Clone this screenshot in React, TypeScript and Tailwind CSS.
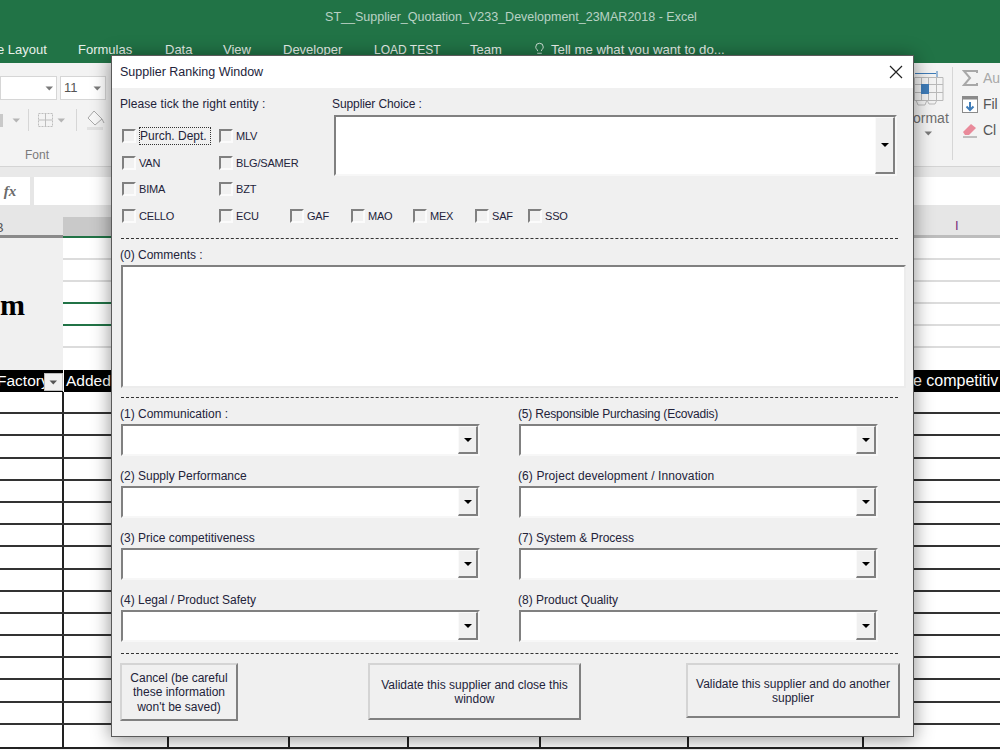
import React from "react";
import { Lightbulb } from "lucide-react";

const cols = [64, 105, 121, 119, 132, 148, 175, 136];
const font = "font-['Liberation_Sans',Arial,sans-serif]";

function Caret({ color = "#7a7a7a" }: { color?: string }) {
  return (
    <svg width="9" height="5" viewBox="0 0 9 5">
      <path d="M0.5 0.5 H8 L4.25 4.5 Z" fill={color} />
    </svg>
  );
}

function Check({ label, boxed }: { label: string; boxed?: boolean }) {
  return (
    <div className="flex items-center">
      <span className="block w-[14px] h-[14px] border-2 border-t-[#808080] border-l-[#808080] border-b-[#fbfbfb] border-r-[#fbfbfb] bg-[#f1f1f1]" />
      {boxed ? (
        <span className="ml-[3px] px-[0px] w-[72px] h-[18px] leading-[16px] whitespace-nowrap border border-dotted border-[#333]">{label}</span>
      ) : (
        <span className="ml-[3px] leading-[16px] text-[11px] tracking-[-0.2px] whitespace-nowrap">{label}</span>
      )}
    </div>
  );
}

function DropBtn() {
  return (
    <div className="w-[20px] flex items-center justify-center pl-[1px] bg-[#f0f0f0] border-l border-t border-l-[#fafafa] border-t-[#fafafa] border-r-2 border-b-2 border-r-[#808080] border-b-[#808080]">
      <svg width="8" height="4" viewBox="0 0 8 4"><path d="M0 0 H8 L4 4 Z" fill="#000" /></svg>
    </div>
  );
}

function Combo({ label, labelClass = "" }: { label: string; labelClass?: string }) {
  return (
    <div>
      <div className={`h-[16px] leading-[17px] ${labelClass}`}>{label}</div>
      <div className="mt-[2px] ml-[1px] w-[359px] h-[32px] flex bg-white border-2 border-t-[#808080] border-l-[#808080] border-b-[#f7f7f7] border-r-[#f7f7f7]">
        <div className="flex-1" />
        <DropBtn />
      </div>
    </div>
  );
}

function Divider({ className }: { className: string }) {
  return <div className={`ml-[1px] w-[777px] h-0 border-t border-dashed border-[#333] ${className}`} />;
}

function Btn({ children, className }: { children: React.ReactNode; className: string }) {
  return (
    <div className={`flex items-center justify-center text-center leading-[14.5px] px-2 pt-[1px] bg-[#f0f0f0] border-t-2 border-l-2 border-t-[#d4d4d4] border-l-[#d4d4d4] border-r-2 border-b-2 border-r-[#808080] border-b-[#808080] ${className}`}>
      <span>{children}</span>
    </div>
  );
}

export default function App() {
  const tabs: [string, string, string][] = [
    ["e Layout", "w-[81px] ml-[-3px]", "text-[13px]"],
    ["Formulas", "w-[87px]", "text-[13px]"],
    ["Data", "w-[58px]", "text-[13px]"],
    ["View", "w-[60px]", "text-[13px]"],
    ["Developer", "w-[91px]", "text-[13px]"],
    ["LOAD TEST", "w-[96px]", "text-[12px]"],
    ["Team", "w-[63px]", "text-[13px]"],
  ];
  const greens = ["#dcdcdc", "#dcdcdc", "#217346", "#217346", "#dcdcdc", "transparent"];
  return (
    <div className={`relative w-[1000px] h-[750px] overflow-hidden bg-white ${font}`}>
      {/* Excel title + tabs */}
      <div className="h-[63px] bg-[#217346] text-[#dfe9e3] flex flex-col">
        <div className="h-[35px] pt-[9px] text-center text-[12.5px] leading-[16px] pl-[22px] opacity-80">
          ST__Supplier_Quotation_V233_Development_23MAR2018 - Excel
        </div>
        <div className="flex items-center h-[28px] pt-[1px] text-[#e8f0ea]">
          {tabs.map(([t, w, s]) => (
            <div key={t} className={`${w} ${s} shrink-0 whitespace-nowrap`}>{t}</div>
          ))}
          <Lightbulb size={15} className="ml-[-1px]" strokeWidth={1.4} />
          <span className="ml-[4px] text-[13.2px]">Tell me what you want to do...</span>
        </div>
      </div>

      {/* Ribbon */}
      <div className="h-[104px] bg-[#f3f3f3] border-b border-[#d4d4d4] flex justify-between text-[#7a7a7a] text-[13px]">
        <div className="w-[111px] flex flex-col">
          <div className="flex mt-[13px] h-[24px] gap-[3px]">
            <div className="w-[57px] bg-white border border-[#d6d6d6] flex items-center justify-end pr-[2px]"><Caret /></div>
            <div className="w-[46px] bg-white border border-[#d6d6d6] flex items-center justify-between pl-[3px] pr-[3px]"><span className="text-[#555]">11</span><Caret /></div>
          </div>
          <div className="flex items-center h-[24px] mt-[8px]">
            <span className="w-[3px] h-[13px] bg-[#c9c9c9]" />
            <span className="ml-[9px]"><Caret color="#b5b5b5" /></span>
            <span className="ml-[7px] w-px h-[22px] bg-[#d6d6d6]" />
            <svg className="ml-[8px]" width="17" height="16" viewBox="0 0 17 16" fill="none" stroke="#bdbdbd"><rect x="1.5" y="1.5" width="14" height="13" strokeDasharray="2 1" /><path d="M8.5 1.5 V14.5 M1.5 8 H15.5" /></svg>
            <span className="ml-[3px]"><Caret color="#b5b5b5" /></span>
            <span className="ml-[10px] w-px h-[22px] bg-[#d6d6d6]" />
            <svg className="ml-[8px]" width="20" height="20" viewBox="0 0 20 20" fill="none" stroke="#a9a9a9"><path d="M9 1 L17 9 L10 15 L3 8 Z" fill="#f8f8f8" /><path d="M17 9 L19 13" /><rect x="2" y="17" width="16" height="3" fill="#e2e2e2" stroke="none" /></svg>
          </div>
          <div className="mt-[15px] h-[16px] leading-[16px] pl-[25px] text-[12px]">Font</div>
        </div>
        <div className="w-[87px] flex">
          <div className="w-[44px] flex flex-col items-start">
            <svg className="mt-[7px]" width="31" height="37" viewBox="0 0 31 37" fill="none">
              <path d="M2 3.5 H23 M24 1 V7" stroke="#3f7cb8" />
              <path d="M1.5 7.5 H30 V30.5 H1.5 Z M1.5 14.5 H30 M1.5 22.5 H30 M8.5 7.5 V30.5 M15.5 7.5 V30.5 M23.5 7.5 V30.5" stroke="#b9b9b9" />
              <rect x="8" y="14" width="8" height="10" fill="#3f7cb8" />
              <path d="M3 30 L5 35 H12 L14 30 M14 30 L16 34 H22 L24 30" stroke="#b9b9b9" />
            </svg>
            <div className="mt-[3px] leading-[16px] text-[14px] text-[#6d6d6d]">ormat</div>
            <div className="mt-[5px] ml-[11px]"><Caret /></div>
          </div>
          <span className="w-px h-[93px] mt-[4px] bg-[#d6d6d6]" />
          <div className="pl-[9px] flex flex-col gap-[8px] pt-[6px] text-[14px]">
            <div className="flex items-center h-[18px] gap-[5px]">
              <svg width="16" height="18" viewBox="0 0 16 18" fill="none"><path d="M15 4 V2 H2 L8 9 L2 16 H15 V14" stroke="#a8a8a8" strokeWidth="2" /></svg>
              <span className="text-[#a8a8a8]">Au</span>
            </div>
            <div className="flex items-center h-[18px] gap-[5px]">
              <svg width="16" height="17" viewBox="0 0 16 17" fill="none"><rect x="0.5" y="0.5" width="15" height="16" stroke="#8a8a8a" fill="#fff" /><rect x="0.5" y="0.5" width="15" height="3" fill="#8a8a8a" /><path d="M8 6 V14 M4.5 10.5 L8 14 L11.5 10.5" stroke="#3f7cb8" strokeWidth="2" /></svg>
              <span className="text-[#555]">Fil</span>
            </div>
            <div className="flex items-center h-[18px] gap-[5px]">
              <svg width="16" height="16" viewBox="0 0 16 16" fill="none"><path d="M1 10 L9 2 L14 6 L7 13 H3 Z" fill="#e98a9a" /><path d="M1 15 H15" stroke="#8a8a8a" /></svg>
              <span className="text-[#555]">Cl</span>
            </div>
          </div>
        </div>
      </div>
      <div className="h-[10px] bg-[#e9e9e9]" />

      {/* Formula bar */}
      <div className="h-[40px] bg-[#e6e6e6] flex items-start">
        <div className="w-[30px] h-[28px] bg-white flex items-center justify-center pr-[10px] text-[15px] italic text-[#6a6a6a] font-['Liberation_Serif',serif] font-bold">fx</div>
        <div className="ml-[4px] flex-1 h-[28px] bg-white" />
      </div>

      {/* Column headers */}
      <div className="h-[21px] flex bg-[#e6e6e6] text-[13px] text-[#555]">
        <div className="w-[63px] leading-[21px] border-b-[3px] border-[#8a8a8a] overflow-hidden"><span className="block ml-[-5px]">B</span></div>
        <div className="w-[850px] bg-[#c9c9c9] border-b-2 border-[#217346]" />
        <div className="flex-1 border-b-[3px] border-[#bdbdbd] pl-[42px] leading-[17px] text-[#7a2a7a]">I</div>
      </div>

      {/* Upper sheet */}
      <div className="h-[132px] flex">
        <div className="w-[63px] bg-[#f0f0f0] overflow-hidden">
          <div className="pt-[49px] text-right pr-[38px] font-['Liberation_Serif',serif] font-bold text-black text-[30px] leading-[36px]">m</div>
        </div>
        <div className="flex-1 flex flex-col">
          {greens.map((c, i) => (
            <div key={i} className="h-[22px] flex">
              <div className="w-[48px] border-b-2" style={{ borderColor: c }} />
              <div className={i === 5 ? "flex-1" : "flex-1 border-b-2 border-[#dcdcdc]"} />
            </div>
          ))}
        </div>
      </div>

      {/* Black header row */}
      <div className="h-[22px] bg-black text-white text-[15.5px] leading-[22px] flex relative overflow-hidden">
        <div className="w-[64px] border-r border-white whitespace-nowrap overflow-hidden">
          <span className="block ml-[-3px]">Factory</span>
        </div>
        <div className="pl-[2px]">Added</div>
        <div className="ml-auto w-[87px] whitespace-nowrap text-[16px] overflow-hidden">e competitiv</div>
        <div className="absolute left-[44px] top-[3px] w-[19px] h-[18px] bg-[#f0f0f0] border border-[#bbb] flex items-center justify-center"><Caret color="#555" /></div>
      </div>

      {/* Table rows */}
      <div className="flex flex-col border-b-2 border-[#222]">
        {Array.from({ length: 16 }).map((_, r) => (
          <div key={r} className="h-[22.2px] flex border-b-2 border-[#333] box-border last:border-b-0">
            {cols.map((w, i) => (
              <div key={i} className="h-full border-r-2 border-[#222] last:border-r-0" style={{ width: w }} />
            ))}
          </div>
        ))}
      </div>
      <div className="ml-[18px] h-[6px] bg-[#f0f0f0]" />

      {/* Supplier Ranking dialog */}
      <div className="absolute left-[111px] top-[55px] w-[803px] h-[682px] border border-[#5a5a5a] bg-[#f0f0f0] shadow-[0_2px_18px_rgba(0,0,0,0.45)] text-[12px] text-[#23233a] flex flex-col">
        <div className="h-[32px] shrink-0 bg-white flex items-center justify-between pl-[8px] pr-[10px]">
          <span className="text-[12.5px] pt-[1px]">Supplier Ranking Window</span>
          <svg width="14" height="14" viewBox="0 0 14 14" fill="none" stroke="#222" strokeWidth="1.2"><path d="M1 1 L13 13 M13 1 L1 13" /></svg>
        </div>
        <div className="pl-[8px] pt-[8px] flex flex-col">
          <div className="flex">
            <div className="w-[212px]">
              <div className="h-[16px] leading-[17px] tracking-[0.07px]">Please tick the right entity :</div>
              <div className="mt-[11px] ml-[2px] grid grid-cols-[97px_1fr] auto-rows-[26.5px] items-center">
                <Check label="Purch. Dept." boxed />
                <Check label="MLV" />
                <Check label="VAN" />
                <Check label="BLG/SAMER" />
                <Check label="BIMA" />
                <Check label="BZT" />
              </div>
            </div>
            <div>
              <div className="h-[16px] leading-[17px] tracking-[-0.1px]">Supplier Choice :</div>
              <div className="mt-[3px] ml-[2px] w-[563px] h-[61px] flex bg-white border-2 border-t-[#808080] border-l-[#808080] border-b-[#f7f7f7] border-r-[#f7f7f7]">
                <div className="flex-1" />
                <DropBtn />
              </div>
            </div>
          </div>
          <div className="ml-[2px] h-[26.5px] flex items-center">
            <div className="w-[97px]"><Check label="CELLO" /></div>
            <div className="w-[71px]"><Check label="ECU" /></div>
            <div className="w-[61px]"><Check label="GAF" /></div>
            <div className="w-[62px]"><Check label="MAO" /></div>
            <div className="w-[62px]"><Check label="MEX" /></div>
            <div className="w-[53px]"><Check label="SAF" /></div>
            <Check label="SSO" />
          </div>
          <Divider className="mt-[9px]" />
          <div className="mt-[8px] h-[16px] leading-[17px]">(0) Comments :</div>
          <div className="mt-[2px] ml-[1px] w-[785px] h-[123px] bg-white border-2 border-t-[#808080] border-l-[#808080] border-b-[#ececec] border-r-[#ececec]" />
          <Divider className="mt-[9px]" />
          <div className="mt-[8px] grid grid-cols-[398px_1fr] gap-y-[12px]">
            <Combo label="(1) Communication :" />
            <Combo label="(5) Responsible Purchasing (Ecovadis)" labelClass="tracking-[-0.2px]" />
            <Combo label="(2) Supply Performance" />
            <Combo label="(6) Project development / Innovation" labelClass="tracking-[0.1px]" />
            <Combo label="(3) Price competitiveness" />
            <Combo label="(7) System & Process" />
            <Combo label="(4) Legal / Product Safety" />
            <Combo label="(8) Product Quality" />
          </div>
          <Divider className="mt-[11px]" />
          <div className="mt-[9px] flex items-start">
            <Btn className="w-[118px] h-[58px]">Cancel (be careful these information won't be saved)</Btn>
            <Btn className="ml-[130px] w-[213px] h-[57px]">Validate this supplier and close this window</Btn>
            <Btn className="ml-[105px] w-[214px] h-[55px]">Validate this supplier and do another supplier</Btn>
          </div>
        </div>
      </div>
    </div>
  );
}
